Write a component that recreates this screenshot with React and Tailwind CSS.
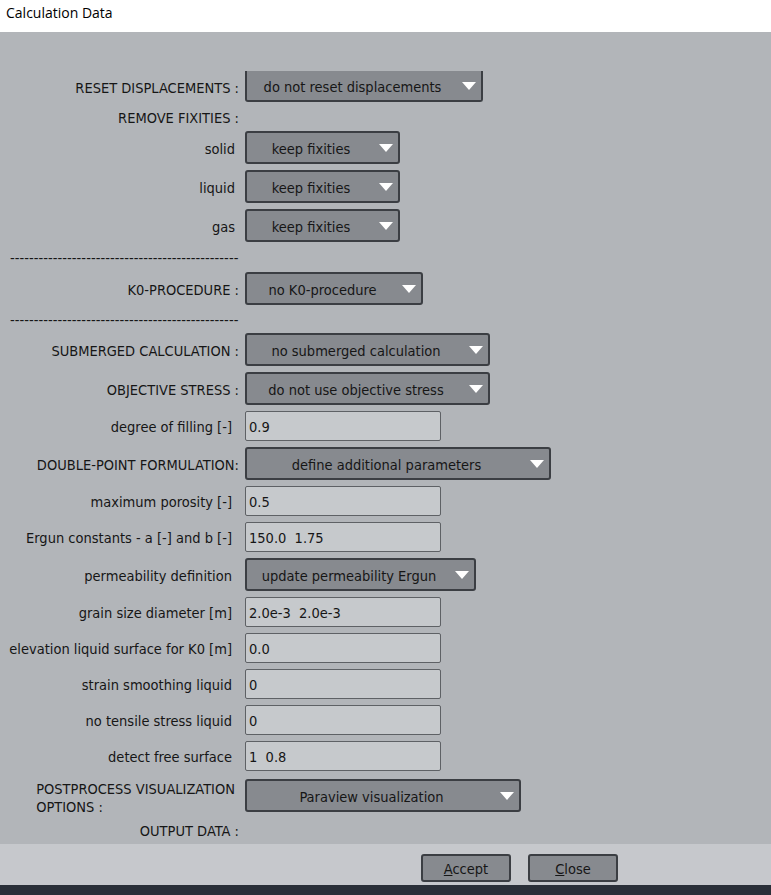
import React from 'react'

const font = { fontFamily: '"DejaVu Sans Condensed", "DejaVu Sans", sans-serif' }

function Label({ children, pr = 'pr-0' }) {
  return (
    <div className={`w-[239px] shrink-0 text-right whitespace-nowrap pt-[4px] ${pr}`}>{children}</div>
  )
}

function Arrow() {
  return (
    <span className="ml-[4px] mr-[5px] w-0 h-0 border-l-[7px] border-r-[7px] border-t-[8px] border-l-transparent border-r-transparent border-t-white" />
  )
}

function Select({ value, w }) {
  return (
    <div className={`${w} h-[33px] flex items-center bg-[#878a8f] border-2 border-[#3b3e43] rounded-[3px]`}>
      <span className="flex-1 text-center whitespace-nowrap pt-[4px]">{value}</span>
      <Arrow />
    </div>
  )
}

function Input({ value }) {
  return (
    <div className="w-[196px] h-[30px] flex items-center pl-[3px] pt-[3px] bg-[#c6c9cc] border border-[#5e6165] rounded-[2px] whitespace-pre">
      {value}
    </div>
  )
}

function Row({ label, mt, h, pr, children }) {
  return (
    <div className={`flex items-center gap-[6px] ${mt} ${h}`}>
      <Label pr={pr}>{label}</Label>
      {children}
    </div>
  )
}

function Dashes({ mt }) {
  return (
    <div className={`${mt} h-[20px] flex items-center`}>
      <div className="ml-[10px] w-[229px] whitespace-nowrap leading-none tracking-[0.05px]">
        {'-'.repeat(48)}
      </div>
    </div>
  )
}

export default function App() {
  return (
    <div className="w-[771px] h-[895px] flex flex-col text-[14.5px] text-[#161616]" style={font}>
      <div className="h-[32px] shrink-0 bg-white pl-[6px] pt-[3px] leading-[20px] text-[14px] text-black" style={{ fontFamily: '"Open Sans", sans-serif' }}>
        Calculation Data
      </div>

      <div className="flex-1 min-h-0 bg-[#b2b5b9] pt-[39px] flex flex-col">
        <Row label="RESET DISPLACEMENTS :" h="h-[31px]">
          <div className="w-[238px] h-[31px] flex items-center bg-[#878a8f] border-2 border-t-0 border-[#3b3e43] rounded-b-[3px]">
            <span className="flex-1 text-center whitespace-nowrap pt-[4px]">do not reset displacements</span>
            <Arrow />
          </div>
        </Row>
        <Row label="REMOVE FIXITIES :" mt="mt-[3px]" h="h-[24px]" />
        <Row label="solid" pr="pr-[4px]" mt="mt-[2px]">
          <Select value="keep fixities" w="w-[155px]" />
        </Row>
        <Row label="liquid" pr="pr-[4px]" mt="mt-[6px]">
          <Select value="keep fixities" w="w-[155px]" />
        </Row>
        <Row label="gas" pr="pr-[4px]" mt="mt-[6px]">
          <Select value="keep fixities" w="w-[155px]" />
        </Row>
        <Dashes mt="mt-[6px]" />
        <Row label="K0-PROCEDURE :" mt="mt-[4px]">
          <Select value="no K0-procedure" w="w-[178px]" />
        </Row>
        <Dashes mt="mt-[5px]" />
        <Row label="SUBMERGED CALCULATION :" mt="mt-[3px]">
          <Select value="no submerged calculation" w="w-[245px]" />
        </Row>
        <Row label="OBJECTIVE STRESS :" mt="mt-[6px]">
          <Select value="do not use objective stress" w="w-[245px]" />
        </Row>
        <Row label="degree of filling [-]" pr="pr-[7px]" mt="mt-[6px]">
          <Input value="0.9" />
        </Row>
        <Row label="DOUBLE-POINT FORMULATION:" mt="mt-[6px]">
          <Select value="define additional parameters" w="w-[306px]" />
        </Row>
        <Row label="maximum porosity [-]" pr="pr-[7px]" mt="mt-[6px]">
          <Input value="0.5" />
        </Row>
        <Row label="Ergun constants - a [-] and b [-]" pr="pr-[7px]" mt="mt-[6px]">
          <Input value="150.0  1.75" />
        </Row>
        <Row label="permeability definition" pr="pr-[7px]" mt="mt-[6px]">
          <Select value="update permeability Ergun" w="w-[231px]" />
        </Row>
        <Row label="grain size diameter [m]" pr="pr-[7px]" mt="mt-[6px]">
          <Input value="2.0e-3  2.0e-3" />
        </Row>
        <Row label="elevation liquid surface for K0 [m]" pr="pr-[7px]" mt="mt-[6px]">
          <Input value="0.0" />
        </Row>
        <Row label="strain smoothing liquid" pr="pr-[7px]" mt="mt-[6px]">
          <Input value="0" />
        </Row>
        <Row label="no tensile stress liquid" pr="pr-[7px]" mt="mt-[6px]">
          <Input value="0" />
        </Row>
        <Row label="detect free surface" pr="pr-[7px]" mt="mt-[6px]">
          <Input value="1  0.8" />
        </Row>
        <div className="flex items-center gap-[6px] mt-[8px] h-[33px]">
          <div className="w-[239px] shrink-0 flex justify-end pr-[4px] pt-[4px]">
            <span className="text-left leading-[18px]">POSTPROCESS VISUALIZATION<br />OPTIONS :</span>
          </div>
          <Select value="Paraview visualization" w="w-[276px]" />
        </div>
        <Row label="OUTPUT DATA :" mt="mt-[6px]" h="h-[24px]" />
      </div>

      <div className="h-[41px] shrink-0 bg-[#c6c8cc] flex justify-end items-start pt-[10px] pr-[153px] gap-[17px]">
        <button className="w-[90px] h-[28px] pt-[3px] bg-[#878a8f] border-2 border-[#3b3e43] rounded-[3px] flex items-center justify-center">
          <span><span className="underline">A</span>ccept</span>
        </button>
        <button className="w-[90px] h-[28px] pt-[3px] bg-[#878a8f] border-2 border-[#3b3e43] rounded-[3px] flex items-center justify-center">
          <span><span className="underline">C</span>lose</span>
        </button>
      </div>
      <div className="h-[10px] shrink-0 bg-[#2a2f38]" />
    </div>
  )
}
